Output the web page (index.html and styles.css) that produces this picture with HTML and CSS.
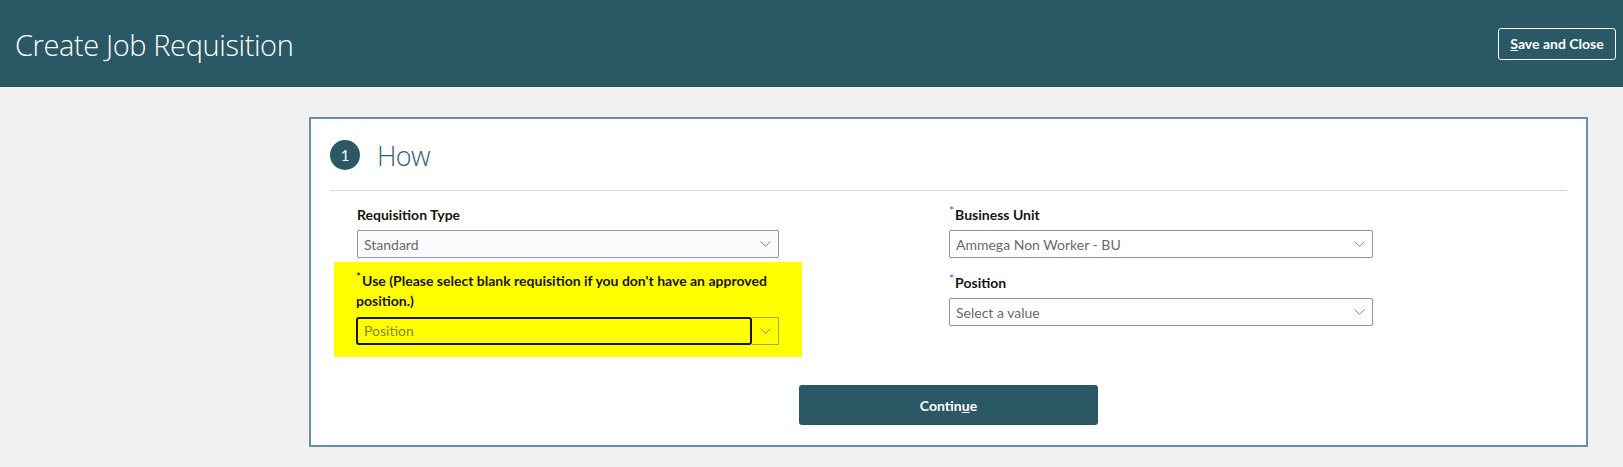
FILE: index.html
```html
<!DOCTYPE html>
<html>
<head>
  <title>Create Job Requisition</title>
  <meta charset="utf-8">
  <meta name="viewport" content="width=device-width, initial-scale=1.0">
  <link rel="stylesheet" href="styles.css">
</head>
<body>
  <div class="header">
    <h1 class="page-title">Create Job Requisition</h1>
    <button class="save-btn"><u>S</u>ave and Close</button>
  </div>

  <div class="main">
    <div class="card">
      <div class="step-head">
        <span class="step-num">1</span>
        <h2 class="step-title">How</h2>
      </div>
      <div class="divider"></div>

      <div class="form-grid">
        <div class="form-col">
          <div class="field">
            <label class="field-label">Requisition Type</label>
            <div class="select select-readonly">
              <span class="select-value">Standard</span>
              <svg class="chevron" width="11" height="6" viewBox="0 0 11 6"><polyline points="0.5,0.5 5.5,5.2 10.5,0.5" fill="none" stroke="#7d8790" stroke-width="1"/></svg>
            </div>
          </div>

          <div class="field field-highlight">
            <label class="field-label required">Use (Please select blank requisition if you don't have an approved position.)</label>
            <div class="combo">
              <div class="combo-input">Position</div>
              <div class="combo-arrow">
                <svg class="chevron" width="11" height="6" viewBox="0 0 11 6"><polyline points="0.5,0.5 5.5,5.2 10.5,0.5" fill="none" stroke="#8e8e3c" stroke-width="1"/></svg>
              </div>
            </div>
          </div>
        </div>

        <div class="form-col">
          <div class="field">
            <label class="field-label required required-blue">Business Unit</label>
            <div class="select">
              <span class="select-value">Ammega Non Worker - BU</span>
              <svg class="chevron" width="11" height="6" viewBox="0 0 11 6"><polyline points="0.5,0.5 5.5,5.2 10.5,0.5" fill="none" stroke="#7d8790" stroke-width="1"/></svg>
            </div>
          </div>

          <div class="field">
            <label class="field-label required required-blue">Position</label>
            <div class="select">
              <span class="select-value">Select a value</span>
              <svg class="chevron" width="11" height="6" viewBox="0 0 11 6"><polyline points="0.5,0.5 5.5,5.2 10.5,0.5" fill="none" stroke="#7d8790" stroke-width="1"/></svg>
            </div>
          </div>
        </div>
      </div>

      <div class="actions">
        <button class="continue-btn">Contin<u>u</u>e</button>
      </div>
    </div>
  </div>
</body>
</html>
```

FILE: styles.css
```css
* {
  margin: 0;
  padding: 0;
  box-sizing: border-box;
}

body {
  font-family: Lato, "Open Sans", sans-serif;
  background: #f1f1f1;
  color: #161513;
}

.header {
  height: 87px;
  background: #2a5864;
  display: flex;
  align-items: center;
  justify-content: space-between;
  padding: 0 7px 0 15px;
}

.page-title {
  color: #ffffff;
  font-family: "Open Sans", sans-serif;
  font-weight: 300;
  font-size: 29px;
  letter-spacing: -0.4px;
  margin-top: 1px;
}

.save-btn {
  width: 118px;
  height: 32px;
  background: transparent;
  border: 1px solid #ffffff;
  border-radius: 3px;
  color: #ffffff;
  font-family: Lato, sans-serif;
  font-weight: 700;
  font-size: 14px;
}

.main {
  padding: 30px 35px 20px 309px;
}

.card {
  background: #ffffff;
  border: 2px solid #6a8ea6;
  padding: 21px 19px 20px 19px;
}

.step-head {
  display: flex;
  align-items: center;
  gap: 17px;
  height: 30px;
}

.step-num {
  width: 30px;
  height: 30px;
  border-radius: 50%;
  background: #2a5864;
  color: #ffffff;
  font-size: 15px;
  display: flex;
  align-items: center;
  justify-content: center;
}

.step-title {
  font-family: "Open Sans", sans-serif;
  font-weight: 300;
  font-size: 27px;
  color: #2f6474;
  letter-spacing: -0.6px;
}

.divider {
  height: 1px;
  background: #d6d6d6;
  margin-top: 20px;
}

.form-grid {
  display: grid;
  grid-template-columns: 422px 424px;
  column-gap: 170px;
  padding-left: 27px;
  margin-top: 14px;
}

.field + .field {
  margin-top: 15px;
}

.field-label {
  display: block;
  font-size: 14px;
  font-weight: 700;
  line-height: 20px;
  margin-bottom: 5px;
  color: #161513;
}

.required::before {
  content: "*";
  display: inline-block;
  font-weight: 400;
  font-size: 12px;
  line-height: 12px;
  vertical-align: top;
  margin-right: 1px;
}

.required-blue::before {
  color: #1b75bb;
}

.select {
  height: 28px;
  border: 1px solid #8e979e;
  border-radius: 2px;
  background: #ffffff;
  display: flex;
  align-items: center;
  justify-content: space-between;
  padding: 0 7px 0 6px;
}

.select-readonly {
  background: #f9fbfc;
}

.select-value {
  font-size: 14px;
  color: #6a6a6a;
}

.field-highlight {
  background: #ffff00;
  margin: 4px -23px 0 -23px;
  padding: 9px 23px 12px 22px;
}

.field + .field-highlight {
  margin-top: 4px;
}

.field-highlight .field-label {
  line-height: 20px;
  margin-bottom: 6px;
}

.combo {
  display: flex;
  height: 28px;
}

.combo-input {
  flex: 1;
  border: 2px solid #161513;
  border-radius: 3px;
  font-size: 14px;
  color: #85852a;
  padding: 2px 6px 0 6px;
  line-height: 20px;
}

.combo-arrow {
  width: 27px;
  border: 1px solid #a4a450;
  border-left: none;
  display: flex;
  align-items: center;
  justify-content: center;
}

.actions {
  display: flex;
  justify-content: center;
  margin-top: 28px;
}

.continue-btn {
  width: 299px;
  height: 40px;
  background: #2a5864;
  border: none;
  border-radius: 3px;
  color: #ffffff;
  font-family: Lato, sans-serif;
  font-weight: 700;
  font-size: 14px;
}
```
